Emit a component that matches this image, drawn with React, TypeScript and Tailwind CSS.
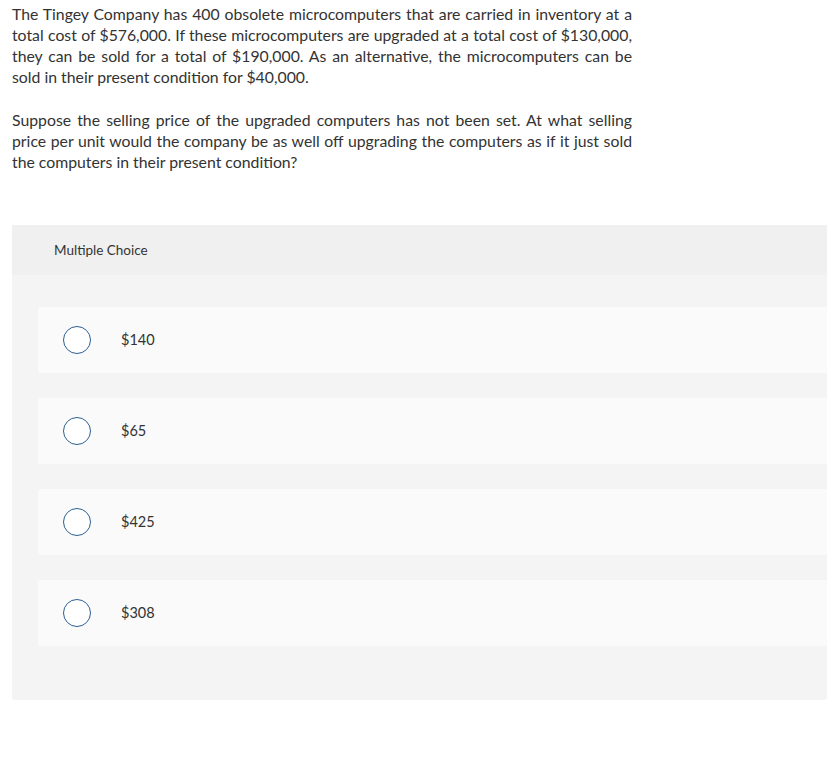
const options = ['$140', '$65', '$425', '$308']

function Radio() {
  return <span className="block h-[28px] w-[28px] shrink-0 rounded-full border-[1.5px] border-[#2c5f91] bg-white" />
}

export default function App() {
  return (
    <div className="min-h-[779px] overflow-hidden bg-white font-['Lato',sans-serif] text-[#333]">
      <div className="w-[620px] pl-[12px] pt-[3px] text-justify text-[15.8px] leading-[21px] box-content">
        <p>
          The Tingey Company has 400 obsolete microcomputers that are carried in inventory at a total cost of $576,000. If
          these microcomputers are upgraded at a total cost of $130,000, they can be sold for a total of $190,000. As an
          alternative, the microcomputers can be sold in their present condition for $40,000.
        </p>
        <p className="mt-[22px]">
          Suppose the selling price of the upgraded computers has not been set. At what selling price per unit would the
          company be as well off upgrading the computers as if it just sold the computers in their present condition?
        </p>
      </div>

      <div className="ml-[12px] mt-[53px] w-[815px] rounded-b-[3px] bg-[#f4f4f4]">
        <div className="flex h-[50px] items-center bg-[#f0f0f0] pl-[42px] text-[13.5px]">Multiple Choice</div>
        <div className="flex flex-col gap-[25px] pb-[54px] pl-[26px] pt-[32px]">
          {options.map((o) => (
            <div key={o} className="flex h-[66px] items-center rounded-l-[3px] bg-[#fafafa] pl-[25px]">
              <Radio />
              <span className="ml-[30px] text-[14.5px]">{o}</span>
            </div>
          ))}
        </div>
      </div>
    </div>
  )
}
